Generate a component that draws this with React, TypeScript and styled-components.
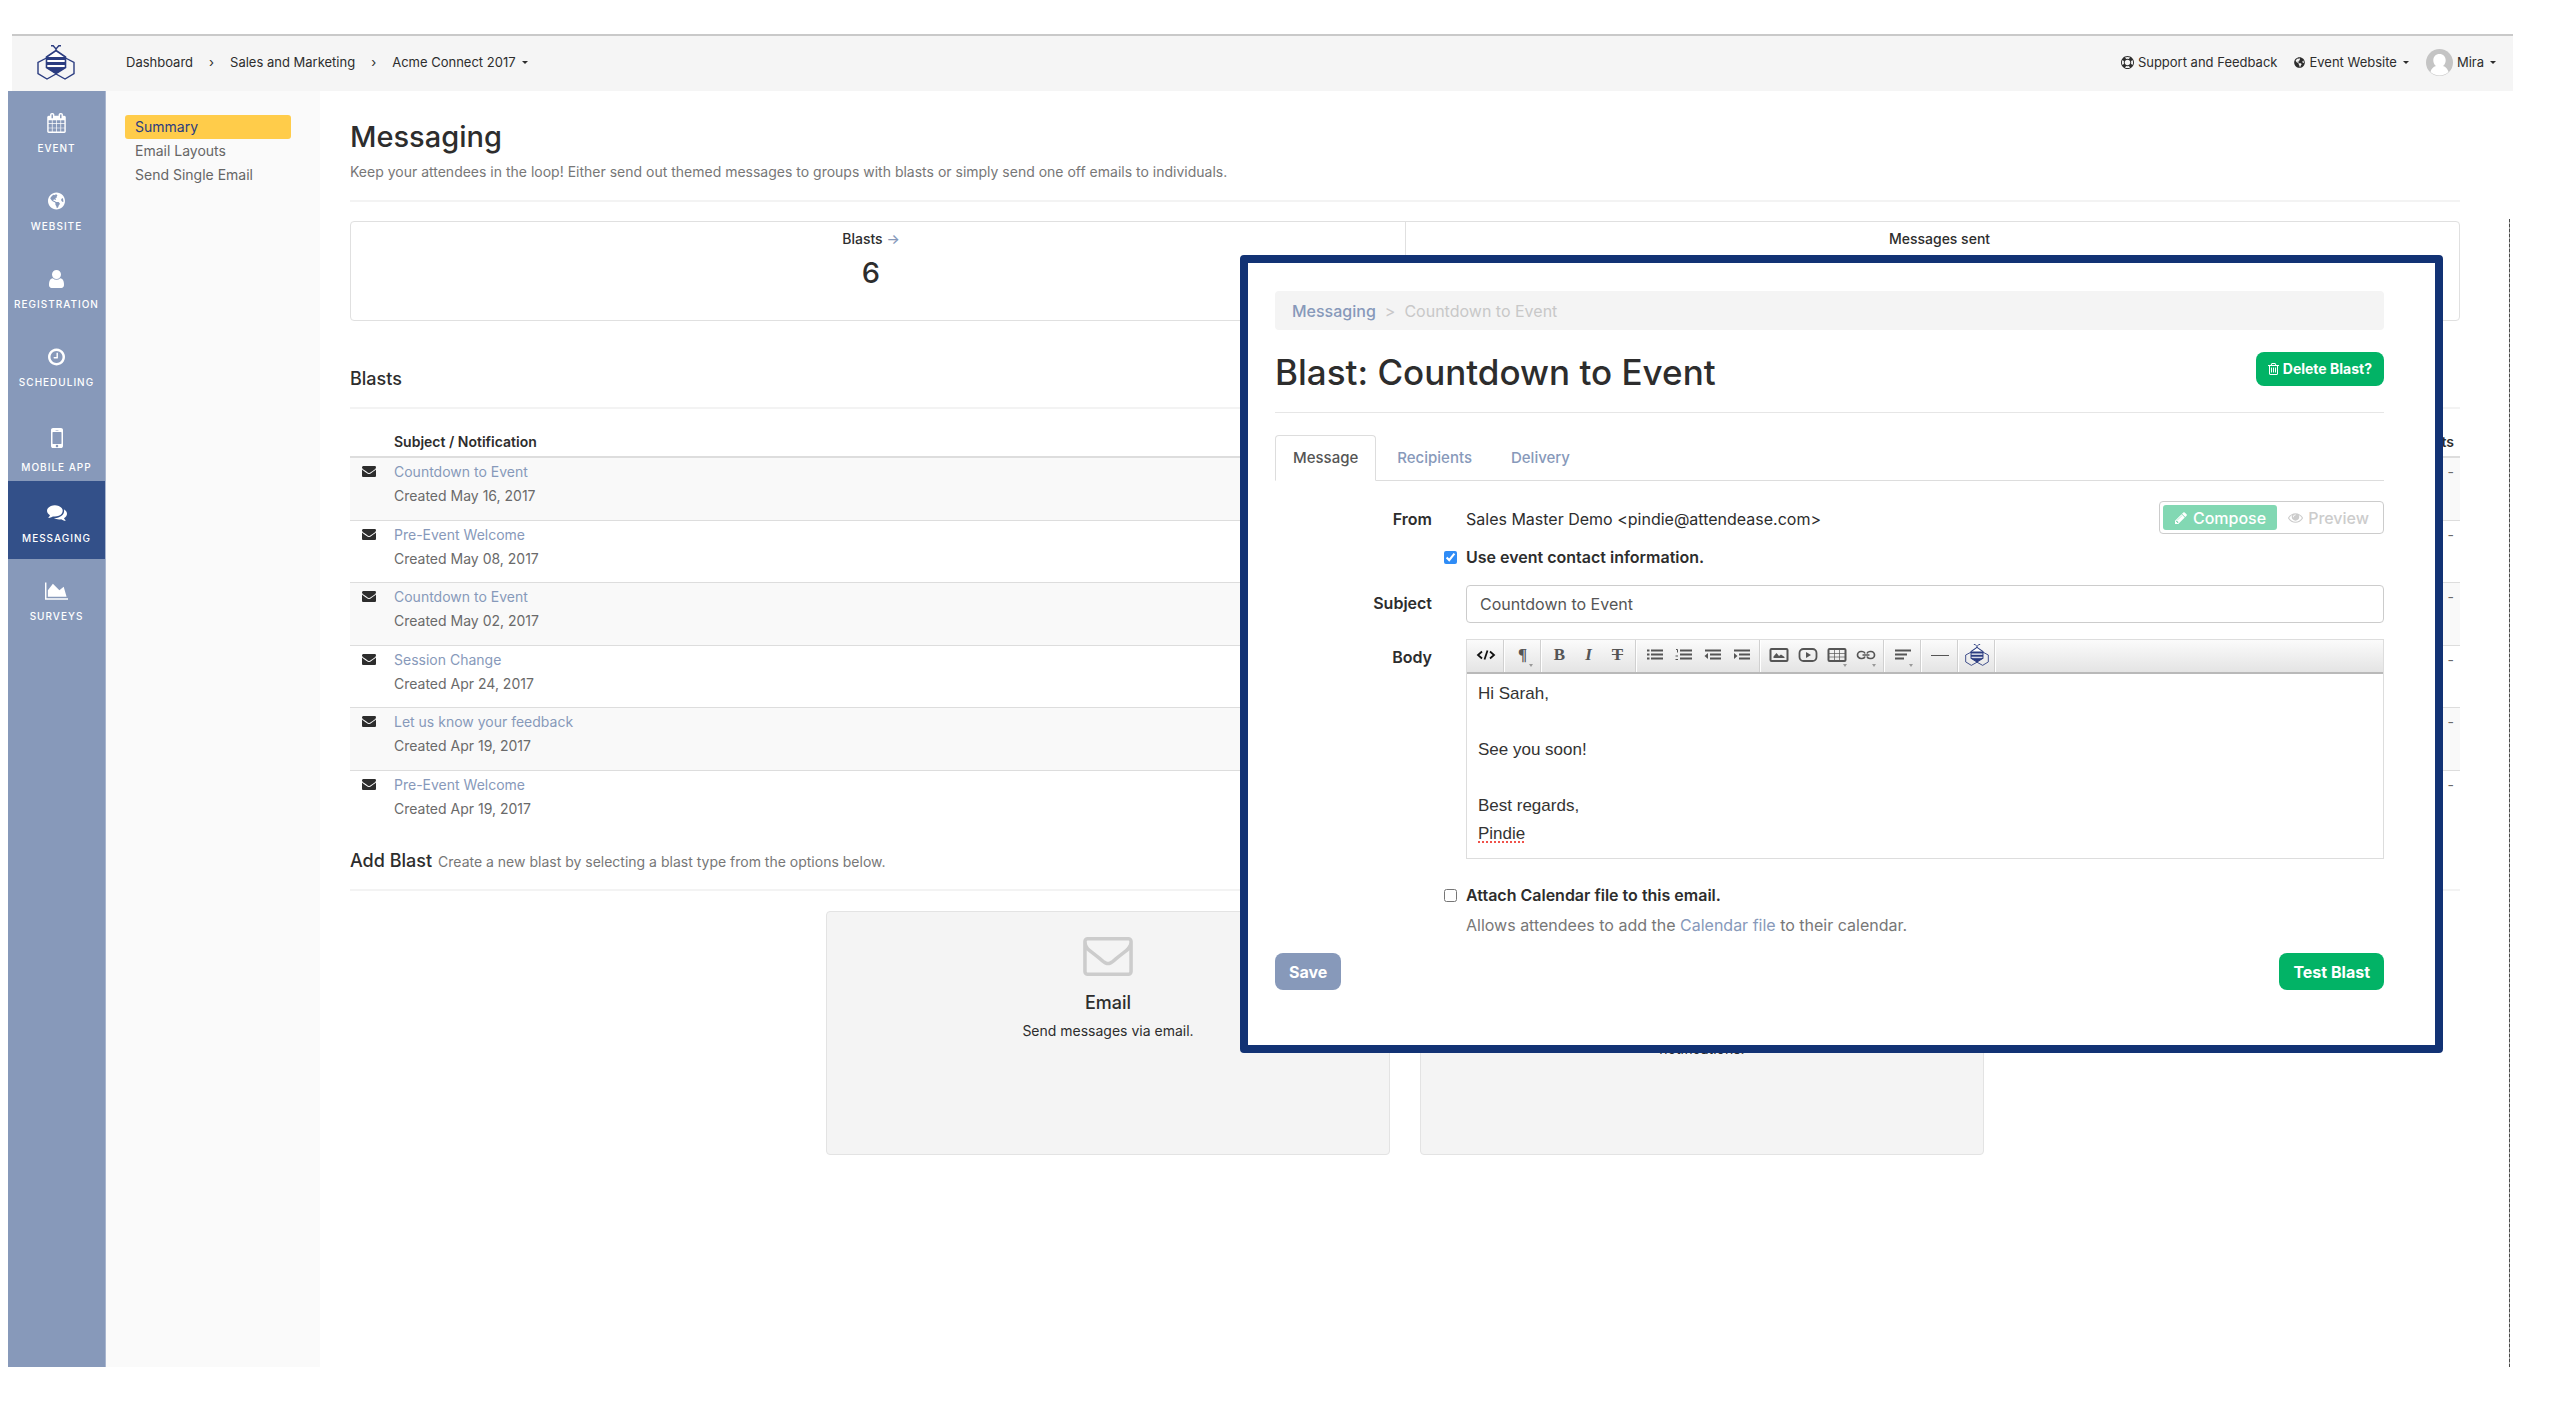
import React from "react";
import styled, { createGlobalStyle, css } from "styled-components";
import { FaGlobeAmericas } from "react-icons/fa";

const navy = "#123274";
const link = "#8799ba";
const green = "#02b366";
const ink = "#2d2d2d";

const GlobalStyle = createGlobalStyle`
  *, *::before, *::after { box-sizing: border-box; }
  body { margin: 0; background: #fff; color: ${ink}; font: 14px/20px Inter, "Open Sans", sans-serif; }
  h1, h2, h3, p, ul { margin: 0; padding: 0; }
  ul { list-style: none; }
  a { color: inherit; text-decoration: none; }
  button, input { font: inherit; }
`;

/* ---------- icons ---------- */

const paths = {
  calendar:
    "M192 1664h288v-288h-288v288zm352 0h320v-288h-320v288zm-352-352h288v-320h-288v320zm352 0h320v-320h-320v320zm-352-384h288v-288h-288v288zm736 736h320v-288h-320v288zm-384-736h320v-288h-320v288zm768 736h288v-288h-288v288zm-384-352h320v-320h-320v320zm-352-864v-288q0-13-9.5-22.5t-22.5-9.5h-64q-13 0-22.5 9.5t-9.5 22.5v288q0 13 9.5 22.5t22.5 9.5h64q13 0 22.5-9.5t9.5-22.5zm736 864h288v-320h-288v320zm-384-384h320v-288h-320v288zm384 0h288v-288h-288v288zm32-480v-288q0-13-9.5-22.5t-22.5-9.5h-64q-13 0-22.5 9.5t-9.5 22.5v288q0 13 9.5 22.5t22.5 9.5h64q13 0 22.5-9.5t9.5-22.5zm384-64v1280q0 52-38 90t-90 38h-1408q-52 0-90-38t-38-90v-1280q0-52 38-90t90-38h128v-96q0-66 47-113t113-47h64q66 0 113 47t47 113v96h384v-96q0-66 47-113t113-47h64q66 0 113 47t47 113v96h128q52 0 90 38t38 90z",
  user: "M1536 1399q0 109-62.5 187t-150.5 78h-854q-88 0-150.5-78t-62.5-187q0-85 8.5-160.5t31.5-152 58.5-131 94-89 134.5-34.5q131 128 313 128t313-128q76 0 134.5 34.5t94 89 58.5 131 31.5 152 8.5 160.5zm-256-887q0 159-112.5 271.5t-271.5 112.5-271.5-112.5-112.5-271.5 112.5-271.5 271.5-112.5 271.5 112.5 112.5 271.5z",
  clock:
    "M1024 544v448q0 14-9 23t-23 9h-320q-14 0-23-9t-9-23v-64q0-14 9-23t23-9h224v-352q0-14 9-23t23-9h64q14 0 23 9t9 23zm416 352q0-148-73-273t-198-198-273-73-273 73-198 198-73 273 73 273 198 198 273 73 273-73 198-198 73-273zm224 0q0 209-103 385.5t-279.5 279.5-385.5 103-385.5-103-279.5-279.5-103-385.5 103-385.5 279.5-279.5 385.5-103 385.5 103 279.5 279.5 103 385.5z",
  mobile:
    "M976 1408q0-33-23.5-56.5t-56.5-23.5-56.5 23.5-23.5 56.5 23.5 56.5 56.5 23.5 56.5-23.5 23.5-56.5zm208-160v-704q0-13-9.5-22.5t-22.5-9.5h-512q-13 0-22.5 9.5t-9.5 22.5v704q0 13 9.5 22.5t22.5 9.5h512q13 0 22.5-9.5t9.5-22.5zm-192-848q0-16-16-16h-160q-16 0-16 16t16 16h160q16 0 16-16zm288-16v1024q0 52-38 90t-90 38h-512q-52 0-90-38t-38-90v-1024q0-52 38-90t90-38h512q52 0 90 38t38 90z",
  comments:
    "M1408 768q0 139-94 257t-256.5 186.5-353.5 68.5q-86 0-176-16-124 88-278 128-36 9-86 16h-3q-11 0-20.5-8t-11.5-21q-1-3-1-6.5t.5-6.5 2-6l2.5-5 3.5-5.5 4-5 4.5-5 4-4.5q5-6 23-25t26-29.5 22.5-29 25-38.5 20.5-44q-124-72-195-177t-71-224q0-139 94-257t256.5-186.5 353.5-68.5 353.5 68.5 256.5 186.5 94 257zm384 256q0 120-71 224.5t-195 176.5q10 24 20.5 44t25 38.5 22.5 29 26 29.5 23 25q1 1 4 4.5t4.5 5 4 5 3.5 5.5l2.5 5 2 6 .5 6.5-1 6.5q-3 14-13 22t-22 7q-50-7-86-16-154-40-278-128-90 16-176 16-271 0-472-132 58 4 88 4 161 0 309-45t264-129q125-92 192-212t67-254q0-77-23-152 129 71 204 178t75 230z",
  chart: "M2048 1536v128h-2048v-1536h128v1408h1920zm-384-1024l256 896h-1664v-576l448-576 576 576z",
  envelope:
    "M1792 710v794q0 66-47 113t-113 47h-1472q-66 0-113-47t-47-113v-794q44 49 101 87 362 246 497 345 57 42 92.5 65.5t94.5 48 110 24.5h2q51 0 110-24.5t94.5-48 92.5-65.5q170-123 498-345 57-39 100-87zm0-294q0 79-49 151t-122 123q-376 261-468 325-10 7-42.5 31t-54 38.5-52 32.5-57.5 27-50 9h-2q-23 0-50-9t-57.5-27-52-32.5-54-38.5-42.5-31q-91-64-262-182.5t-205-142.5q-62-42-117-115.5t-55-136.5q0-78 41.5-130t118.5-52h1472q65 0 112.5 47t47.5 113z",
  envelopeOutline:
    "M1664 1504v-768q-32 36-69 66-268 206-426 338-51 43-83 67t-86.5 48.5-102.5 24.5h-2q-48 0-102.5-24.5t-86.5-48.5-83-67q-158-132-426-338-37-30-69-66v768q0 13 9.5 22.5t22.5 9.5h1472q13 0 22.5-9.5t9.5-22.5zm0-1051v-24.5l-.5-13-3-12.5-5.5-9-9-7.5-14-2.5h-1472q-13 0-22.5 9.5t-9.5 22.5q0 168 147 284 193 152 401 317 6 5 35 29.5t46 37.5 44.5 31.5 50.5 27.5 43 9h2q20 0 43-9t50.5-27.5 44.5-31.5 46-37.5 35-29.5q208-165 401-317 54-43 100.5-115.5t46.5-131.5zm128-37v1088q0 66-47 113t-113 47h-1472q-66 0-113-47t-47-113v-1088q0-66 47-113t113-47h1472q66 0 113 47t47 113z",
  lifeRing:
    "M896 0q182 0 348 71t286 191 191 286 71 348-71 348-191 286-286 191-348 71-348-71-286-191-191-286-71-348 71-348 191-286 286-191 348-71zm0 128q-190 0-361 90l194 194q82-28 167-28t167 28l194-194q-171-90-361-90zm-678 1129l194-194q-28-82-28-167t28-167l-194-194q-90 171-90 361t90 361zm678 407q190 0 361-90l-194-194q-82 28-167 28t-167-28l-194 194q171 90 361 90zm0-384q159 0 271.5-112.5t112.5-271.5-112.5-271.5-271.5-112.5-271.5 112.5-112.5 271.5 112.5 271.5 271.5 112.5zm484-217l194 194q90-171 90-361t-90-361l-194 194q28 82 28 167t-28 167z",
  trash:
    "M704 736v576q0 14-9 23t-23 9h-64q-14 0-23-9t-9-23v-576q0-14 9-23t23-9h64q14 0 23 9t9 23zm256 0v576q0 14-9 23t-23 9h-64q-14 0-23-9t-9-23v-576q0-14 9-23t23-9h64q14 0 23 9t9 23zm256 0v576q0 14-9 23t-23 9h-64q-14 0-23-9t-9-23v-576q0-14 9-23t23-9h64q14 0 23 9t9 23zm128 724v-948h-896v948q0 22 7 40.5t14.5 27 10.5 8.5h832q3 0 10.5-8.5t14.5-27 7-40.5zm-672-1076h448l-48-117q-7-9-17-11h-317q-10 2-17 11zm928 32v64q0 14-9 23t-23 9h-96v948q0 83-47 143.5t-113 60.5h-832q-66 0-113-58.5t-47-141.5v-952h-96q-14 0-23-9t-9-23v-64q0-14 9-23t23-9h309l70-167q15-37 54-63t79-26h320q40 0 79 26t54 63l70 167h309q14 0 23 9t9 23z",
  pencil:
    "M491 1536l91-91-235-235-91 91v107h128v128h107zm523-928q0-22-22-22-10 0-17 7l-542 542q-7 7-7 17 0 22 22 22 10 0 17-7l542-542q7-7 7-17zm-54-192l416 416-832 832h-416v-416zm683 96q0 53-37 90l-166 166-416-416 166-165q36-38 90-38 53 0 91 38l235 234q37 39 37 91z",
  eye: "M1664 960q-152-236-381-353 61 104 61 225 0 185-131.5 316.5t-316.5 131.5-316.5-131.5-131.5-316.5q0-121 61-225-229 117-381 353 133 205 333.5 326.5t434.5 121.5 434.5-121.5 333.5-326.5zm-720-384q0-20-14-34t-34-14q-125 0-214.5 89.5t-89.5 214.5q0 20 14 34t34 14 34-14 14-34q0-86 61-147t147-61q20 0 34-14t14-34zm848 384q0 34-20 69-140 230-376.5 368.5t-499.5 138.5-499.5-139-376.5-368q-20-35-20-69t20-69q140-229 376.5-368t499.5-139 499.5 139 376.5 368q20 35 20 69z",
};

type IconName = keyof typeof paths;

const viewBoxes: Partial<Record<IconName, string>> = {
  calendar: "64 0 1664 1792",
  user: "256 128 1280 1536",
  clock: "128 128 1536 1536",
  mobile: "512 256 768 1280",
  comments: "0 256 1792 1408",
  chart: "0 128 2048 1536",
  envelope: "0 256 1792 1408",
  envelopeOutline: "0 256 1792 1408",
  trash: "192 128 1408 1536",
};

function Icon({ name, width, height }: { name: IconName; width: number; height: number }) {
  return (
    <svg
      width={width}
      height={height}
      viewBox={viewBoxes[name] ?? "0 0 1792 1792"}
      fill="currentColor"
      aria-hidden="true"
    >
      <path d={paths[name]} />
    </svg>
  );
}

function BeeLogo({ width, height }: { width: number; height: number }) {
  return (
    <svg width={width} height={height} viewBox="0 0 38 35" fill="none" stroke="#2b3c80" aria-hidden="true">
      <path d="M9.500 13 1 17.500v11L10 34l9-5 9 5 9-5.500v-11L28.500 13" strokeWidth="1.400" />
      <path d="M14 .8h2.200L19 4l2.800-3.200H24M19 4v3" strokeWidth="1.400" />
      <path d="M19 5.500l9.500 6.500v10.500L19 28.500l-9.500-6V12z" fill="#fff" strokeWidth="1.600" />
      <path d="M9.500 13.500h19M9.500 18.600h19" strokeWidth="3" />
      <path d="M10 22.600h18l-9 5.800z" fill="#2b3c80" strokeWidth="1" />
    </svg>
  );
}

/* ---------- page frame ---------- */

const Page = styled.div`
  position: relative;
  padding: 34px 37px 53px 8px;
`;

const TopBar = styled.header`
  display: flex;
  align-items: center;
  height: 57px;
  margin-left: 4px;
  padding: 0 17px 3px 25px;
  border-top: 2px solid #c9c9c9;
  background: #f5f5f5;
  font-size: 13px;
`;

const Home = styled.a`
  display: flex;
`;

const Crumbs = styled.nav`
  display: flex;
  flex: 1;
  align-items: center;
  gap: 16px;
  margin-left: 51px;
`;

const TopLinks = styled.div`
  display: flex;
  align-items: center;
  gap: 17px;
`;

const TopLink = styled.a`
  display: flex;
  align-items: center;
  gap: 4px;
`;

const Caret = styled.span`
  border: 3px solid transparent;
  border-top-color: currentColor;
  border-bottom: 0;
  margin-left: 2px;
`;

const Columns = styled.div`
  display: grid;
  grid-template-columns: 98px 214px minmax(0, 1fr) 1px;
  min-height: calc(100vh - 144px);
  margin-right: 3px;
`;

const SideNav = styled.nav`
  background: ${link};
  border-right: 1px solid #a9b6cf;
`;

const SideLink = styled.a<{ $active?: boolean; $tall?: boolean }>`
  display: flex;
  flex-direction: column;
  align-items: center;
  height: 78px;
  padding-top: ${(p) => (p.$tall ? 25 : 22)}px;
  gap: ${(p) => (p.$tall ? 9 : 5)}px;
  color: #fff;
  font-size: 10px;
  line-height: 20px;
  font-weight: 500;
  letter-spacing: 1px;
  text-transform: uppercase;
  background: ${(p) => (p.$active ? "#335089" : "transparent")};

  svg {
    height: 20px;
  }
`;

const SubNav = styled.nav`
  padding: 24px 29px 0 19px;
  background: #fafafa;
`;

const SubLink = styled.a<{ $active?: boolean }>`
  display: block;
  padding: 0 10px;
  border-radius: 3px;
  color: #666;
  line-height: 24px;
  ${(p) =>
    p.$active &&
    css`
      color: #2b3c80;
      background: #ffcc4a;
    `}
`;

const Main = styled.main`
  padding: 29px 49px 0 30px;
`;

const PageEdge = styled.div`
  margin-top: 128px;
  background: repeating-linear-gradient(#4a4a4a 0 3px, #a8a8a8 3px 5px);
`;

/* ---------- summary page ---------- */

const PageTitle = styled.h1`
  font-size: 29px;
  line-height: 34px;
  font-weight: 500;
`;

const Lead = styled.p`
  margin-top: 8px;
  padding-bottom: 18px;
  border-bottom: 2px solid #f3f3f3;
  color: #777;
`;

const Stats = styled.section`
  display: grid;
  grid-template-columns: 1fr 1fr;
  height: 100px;
  margin-top: 19px;
  border: 1px solid #e0e0e0;
  border-radius: 4px;
`;

const Stat = styled.div`
  padding: 7px 14px 0 0;
  text-align: center;
  font-weight: 500;

  & + & {
    padding: 7px 0 0 14px;
    border-left: 1px solid #e0e0e0;
  }
`;

const StatLink = styled.a`
  color: ${link};
`;

const StatValue = styled.div`
  margin-top: 7px;
  font-size: 29px;
  line-height: 34px;
`;

const SectionHead = styled.header<{ $gap: number }>`
  display: flex;
  align-items: baseline;
  gap: 6px;
  margin-top: ${(p) => p.$gap}px;
  padding-bottom: 16px;
  border-bottom: 2px solid #f3f3f3;
  color: #777;
`;

const SectionTitle = styled.h2`
  color: ${ink};
  font-size: 18px;
  line-height: 24px;
  font-weight: 500;
`;

const BlastTable = styled.table`
  width: 100%;
  margin-top: 18px;
  border-collapse: collapse;
  table-layout: fixed;
  line-height: 24px;

  th {
    height: 30px;
    padding: 0 5px;
    border-bottom: 2px solid #ddd;
    font-weight: 600;
    text-align: left;
  }
  td {
    height: 62px;
    padding: 2px 10px 0 5px;
    border-bottom: 1px solid #ddd;
    vertical-align: top;
    color: #6a6a6a;
  }
  th:first-child,
  td:first-child {
    width: 39px;
    padding-left: 12px;
    color: ${ink};
  }
  th:last-child,
  td:last-child {
    padding-right: 6px;
    text-align: right;
  }
  tbody tr:nth-child(odd) td {
    height: 63px;
    background: #f9f9f9;
  }
  tbody tr:last-child td {
    border-bottom: 0;
  }
`;

const BlastLink = styled.a`
  display: block;
  color: ${link};
`;

const Cards = styled.div`
  display: flex;
  justify-content: center;
  gap: 30px;
  margin-top: 20px;
`;

const Card = styled.a`
  flex: 0 1 564px;
  height: 244px;
  padding-top: 25px;
  border: 1px solid #e3e3e3;
  border-radius: 4px;
  background: #f4f4f4;
  text-align: center;

  svg {
    display: block;
    margin: 0 auto 15px;
    color: #ccc;
  }
`;

const CardTitle = styled.h3`
  font-size: 18px;
  line-height: 24px;
  font-weight: 500;
`;

const CardText = styled.p`
  max-width: 220px;
  margin: 7px auto 0;
  line-height: 18px;
`;

/* ---------- blast dialog ---------- */

const Dialog = styled.section`
  position: absolute;
  top: 255px;
  right: 107px;
  width: 1203px;
  padding: 28px 51px 55px 27px;
  border: 8px solid ${navy};
  border-radius: 4px;
  background: #fff;
  font-size: 16px;
`;

const DialogCrumbs = styled.nav`
  display: flex;
  align-items: center;
  gap: 9px;
  height: 39px;
  padding: 0 17px;
  border-radius: 4px;
  background: #f4f4f4;
  color: #c8c8c8;

  a {
    color: ${link};
    font-weight: 500;
  }
`;

const DialogHead = styled.header`
  display: flex;
  align-items: flex-start;
  justify-content: space-between;
  margin-top: 22px;
  padding-bottom: 20px;
  border-bottom: 1px solid #e6e6e6;

  h2 {
    font-size: 35px;
    line-height: 40px;
    font-weight: 500;
  }
`;

const Button = styled.button<{ $tone: string; $small?: boolean }>`
  display: flex;
  align-items: center;
  gap: 4px;
  height: ${(p) => (p.$small ? 34 : 37)}px;
  padding: 0 ${(p) => (p.$small ? 12 : 14)}px;
  border: 0;
  border-radius: 8px;
  background: ${(p) => p.$tone};
  color: #fff;
  font-size: ${(p) => (p.$small ? 14 : 16)}px;
  font-weight: 700;
`;

const Tabs = styled.div`
  display: flex;
  gap: 3px;
  height: 46px;
  margin-top: 22px;
  border-bottom: 1px solid #ddd;
  font-size: 15px;
`;

const Tab = styled.button<{ $active?: boolean }>`
  height: 46px;
  padding: 0 17px;
  border: 1px solid transparent;
  border-radius: 4px 4px 0 0;
  background: none;
  color: ${link};
  font-weight: 500;
  ${(p) =>
    p.$active &&
    css`
      border-color: #ddd #ddd #fff;
      background: #fff;
      color: #555;
    `}
`;

const FormRow = styled.div<{ $gap: number }>`
  display: grid;
  grid-template-columns: 157px minmax(0, 1fr);
  column-gap: 34px;
  margin-top: ${(p) => p.$gap}px;
`;

const FieldLabel = styled.label`
  font-weight: 600;
  line-height: 36px;
  text-align: right;
`;

const Sender = styled.div`
  display: flex;
  justify-content: space-between;
  line-height: 36px;
`;

const Toggle = styled.div`
  display: flex;
  height: 33px;
  padding: 3px;
  border: 1px solid #ccc;
  border-radius: 4px;
`;

const ToggleButton = styled.button<{ $active?: boolean }>`
  display: flex;
  align-items: center;
  gap: 5px;
  padding: 0 11px;
  border: 0;
  border-radius: 3px;
  background: ${(p) => (p.$active ? "#82d8b3" : "none")};
  color: ${(p) => (p.$active ? "#fff" : "#ccc")};
  font-weight: 500;
`;

const CheckRow = styled.div<{ $gap: number }>`
  display: flex;
  align-items: center;
  gap: 9px;
  height: 20px;
  margin-top: ${(p) => p.$gap}px;
  padding-left: 169px;
  font-weight: 600;

  input {
    width: 13px;
    height: 13px;
    margin: 0;
    accent-color: #2f8cf6;
  }
`;

const TextInput = styled.input`
  width: 100%;
  height: 38px;
  padding: 0 13px;
  border: 1px solid #ccc;
  border-radius: 4px;
  color: #555;
`;

const Editor = styled.div`
  border: 1px solid #ddd;
`;

const Toolbar = styled.div`
  display: flex;
  height: 34px;
  border-bottom: 2px solid #b9b9b9;
  background: linear-gradient(#fbfbfb, #e4e4e4);
`;

const ToolGroup = styled.div`
  display: flex;
  padding: 0 3px 0 4px;
  border-right: 1px solid #d0d0d0;
  box-shadow: 1px 0 0 #fff;
`;

const Tool = styled.button`
  position: relative;
  display: grid;
  place-items: center;
  width: 29px;
  padding: 0 0 2px;
  border: 0;
  background: none;
  color: #555;
`;

const ToolGlyph = styled.span<{ $italic?: boolean; $strike?: boolean }>`
  font: ${(p) => (p.$italic ? "italic" : "normal")} 700 17px/20px "Liberation Serif", serif;
  text-decoration: ${(p) => (p.$strike ? "line-through" : "none")};
`;

const MenuMark = styled.span`
  position: absolute;
  right: 4px;
  bottom: 5px;
  border: 2px solid transparent;
  border-top: 3px solid #999;
  border-bottom: 0;
`;

const EditorBody = styled.div`
  padding: 6px 11px 10px;
  color: #333;
  font: 17px/28px "Liberation Sans", Arial, sans-serif;
  outline: 0;

  p {
    min-height: 28px;
  }
`;

const Misspelled = styled.span`
  text-decoration: underline dotted #f0524a 2px;
  text-underline-offset: 2px;
`;

const Help = styled.p`
  margin-top: 10px;
  padding-left: 191px;
  color: #777;

  a {
    color: ${link};
  }
`;

const DialogFoot = styled.footer`
  display: flex;
  justify-content: space-between;
  margin-top: 18px;
`;

/* ---------- toolbar drawings ---------- */

function Drawing({ children }: { children: React.ReactNode }) {
  return (
    <svg width="20" height="16" viewBox="0 0 20 16" fill="none" stroke="currentColor" aria-hidden="true">
      {children}
    </svg>
  );
}

const listLines = "M6 3.500h12M6 7.500h12M6 11.500h12";

const toolGroups: { label: string; menu?: boolean; art: React.ReactNode }[][] = [
  [
    {
      label: "HTML",
      art: (
        <Drawing>
          <path d="M6 4.500 2 8l4 3.500M14 4.500 18 8l-4 3.500M11.500 3.500l-3 9" stroke="#111" strokeWidth="1.800" />
        </Drawing>
      ),
    },
  ],
  [{ label: "Formatting", menu: true, art: <ToolGlyph>¶</ToolGlyph> }],
  [
    { label: "Bold", art: <ToolGlyph>B</ToolGlyph> },
    { label: "Italic", art: <ToolGlyph $italic>I</ToolGlyph> },
    { label: "Strikethrough", art: <ToolGlyph $strike>T</ToolGlyph> },
  ],
  [
    {
      label: "Unordered list",
      art: (
        <Drawing>
          <path d={listLines} strokeWidth="2" />
          <path d="M2 3.500h2.500M2 7.500h2.500M2 11.500h2.500" strokeWidth="2" />
        </Drawing>
      ),
    },
    {
      label: "Ordered list",
      art: (
        <Drawing>
          <path d={listLines} strokeWidth="2" />
          <path d="M2 2.500h1.500v3M1.500 9h2.500M1.500 12.500h2.500" strokeWidth="1" />
        </Drawing>
      ),
    },
    {
      label: "Outdent",
      art: (
        <Drawing>
          <path d="M2 3.500h16M7 7.500h11M7 11.500h11" strokeWidth="2" />
          <path d="M5 6v6L1.500 9z" fill="currentColor" stroke="none" />
        </Drawing>
      ),
    },
    {
      label: "Indent",
      art: (
        <Drawing>
          <path d="M2 3.500h16M7 7.500h11M7 11.500h11" strokeWidth="2" />
          <path d="M2 6v6l3.500-3z" fill="currentColor" stroke="none" />
        </Drawing>
      ),
    },
  ],
  [
    {
      label: "Image",
      art: (
        <Drawing>
          <rect x="1.500" y="2" width="17" height="12" rx="1" strokeWidth="2" />
          <path d="M4.500 11V9.500L7.500 6l2.500 3 2-1.500 3.500 2.500v1z" fill="currentColor" stroke="none" />
        </Drawing>
      ),
    },
    {
      label: "Video",
      art: (
        <Drawing>
          <rect x="1.500" y="2" width="17" height="12" rx="4" strokeWidth="1.800" />
          <path d="M8 5v6l5-3z" fill="currentColor" stroke="none" />
        </Drawing>
      ),
    },
    {
      label: "Table",
      menu: true,
      art: (
        <Drawing>
          <rect x="1.500" y="2" width="17" height="12" rx="1" strokeWidth="2" />
          <path d="M7.500 3v10M12.500 3v10M2 6.500h16M2 10h16" strokeWidth="1" opacity="0.7" />
        </Drawing>
      ),
    },
    {
      label: "Link",
      menu: true,
      art: (
        <Drawing>
          <path
            d="M9 9.500C8.500 11 7.500 11.500 6 11.500H5a3.500 3.500 0 0 1 0-7h1C7.500 4.500 8.500 5 9 6.500M11 6.500c.5-1.500 1.500-2 3-2h1a3.500 3.500 0 0 1 0 7h-1c-1.500 0-2.500-.5-3-2M6.500 8h7"
            strokeWidth="1.700"
          />
        </Drawing>
      ),
    },
  ],
  [
    {
      label: "Align",
      menu: true,
      art: (
        <Drawing>
          <path d="M2 3.500h16M2 7.500h12M2 11.500h9" strokeWidth="2" />
        </Drawing>
      ),
    },
  ],
  [
    {
      label: "Horizontal rule",
      art: (
        <Drawing>
          <path d="M1 8.500h18" strokeWidth="1" />
        </Drawing>
      ),
    },
  ],
  [{ label: "Merge tags", art: <BeeLogo width={24} height={22} /> }],
];

/* ---------- data ---------- */

const sections: { label: string; icon: React.ReactNode; active?: boolean; tall?: boolean }[] = [
  { label: "Event", icon: <Icon name="calendar" width={19} height={20} /> },
  { label: "Website", icon: <FaGlobeAmericas size={17} /> },
  { label: "Registration", icon: <Icon name="user" width={15} height={17} /> },
  { label: "Scheduling", icon: <Icon name="clock" width={17} height={17} /> },
  { label: "Mobile App", icon: <Icon name="mobile" width={12} height={20} />, tall: true },
  { label: "Messaging", icon: <Icon name="comments" width={20} height={16} />, active: true },
  { label: "Surveys", icon: <Icon name="chart" width={23} height={17} /> },
];

const blasts = [
  ["Countdown to Event", "May 16, 2017"],
  ["Pre-Event Welcome", "May 08, 2017"],
  ["Countdown to Event", "May 02, 2017"],
  ["Session Change", "Apr 24, 2017"],
  ["Let us know your feedback", "Apr 19, 2017"],
  ["Pre-Event Welcome", "Apr 19, 2017"],
];

function Avatar() {
  return (
    <svg width="27" height="27" viewBox="0 0 27 27" aria-hidden="true">
      <circle cx="13.500" cy="13.500" r="13.500" fill="#c4c4c4" />
      <path
        d="M13.500 5c3.700 0 6.200 2.700 6.200 6.300 0 2.400-1 4.500-2.700 5.800 2.800.8 4.800 3 5.500 6A13.500 13.500 0 0 1 4.500 23c.7-2.900 2.700-5.100 5.500-5.900-1.700-1.300-2.700-3.400-2.700-5.800C7.300 7.700 9.800 5 13.500 5z"
        fill="#fff"
      />
    </svg>
  );
}

function BlastDialog() {
  return (
    <Dialog role="dialog" aria-labelledby="blast-title">
      <DialogCrumbs>
        <a href="#messaging">Messaging</a>
        <span>&gt;</span>
        <span>Countdown to Event</span>
      </DialogCrumbs>
      <DialogHead>
        <h2 id="blast-title">Blast: Countdown to Event</h2>
        <Button type="button" $tone={green} $small>
          <Icon name="trash" width={11} height={12} />
          Delete Blast?
        </Button>
      </DialogHead>
      <Tabs role="tablist">
        <Tab type="button" role="tab" aria-selected="true" $active>
          Message
        </Tab>
        <Tab type="button" role="tab" aria-selected="false">
          Recipients
        </Tab>
        <Tab type="button" role="tab" aria-selected="false">
          Delivery
        </Tab>
      </Tabs>
      <FormRow $gap={20}>
        <FieldLabel as="span">From</FieldLabel>
        <Sender>
          <span>Sales Master Demo &lt;pindie@attendease.com&gt;</span>
          <Toggle>
            <ToggleButton type="button" $active>
              <Icon name="pencil" width={14} height={14} />
              Compose
            </ToggleButton>
            <ToggleButton type="button">
              <Icon name="eye" width={15} height={15} />
              Preview
            </ToggleButton>
          </Toggle>
        </Sender>
      </FormRow>
      <CheckRow $gap={10}>
        <input id="event-contact" type="checkbox" defaultChecked />
        <label htmlFor="event-contact">Use event contact information.</label>
      </CheckRow>
      <FormRow $gap={18}>
        <FieldLabel htmlFor="subject">Subject</FieldLabel>
        <TextInput id="subject" type="text" defaultValue="Countdown to Event" />
      </FormRow>
      <FormRow $gap={16}>
        <FieldLabel as="span" id="body-label">
          Body
        </FieldLabel>
        <Editor>
          <Toolbar role="toolbar">
            {toolGroups.map((group, i) => (
              <ToolGroup key={i}>
                {group.map((tool) => (
                  <Tool key={tool.label} type="button" aria-label={tool.label}>
                    {tool.art}
                    {tool.menu && <MenuMark />}
                  </Tool>
                ))}
              </ToolGroup>
            ))}
          </Toolbar>
          <EditorBody
            role="textbox"
            aria-multiline="true"
            aria-labelledby="body-label"
            contentEditable
            suppressContentEditableWarning
            spellCheck={false}
          >
            <p>Hi Sarah,</p>
            <p />
            <p>See you soon!</p>
            <p />
            <p>Best regards,</p>
            <p>
              <Misspelled>Pindie</Misspelled>
            </p>
          </EditorBody>
        </Editor>
      </FormRow>
      <CheckRow $gap={26}>
        <input id="attach-calendar" type="checkbox" />
        <label htmlFor="attach-calendar">Attach Calendar file to this email.</label>
      </CheckRow>
      <Help>
        Allows attendees to add the <a href="#calendar-file">Calendar file</a> to their calendar.
      </Help>
      <DialogFoot>
        <Button type="button" $tone={link}>
          Save
        </Button>
        <Button type="button" $tone={green}>
          Test Blast
        </Button>
      </DialogFoot>
    </Dialog>
  );
}

export default function App() {
  return (
    <Page>
      <GlobalStyle />
      <TopBar>
        <Home href="#home" aria-label="Home">
          <BeeLogo width={38} height={35} />
        </Home>
        <Crumbs>
          <a href="#dashboard">Dashboard</a>
          <span>›</span>
          <a href="#sales">Sales and Marketing</a>
          <span>›</span>
          <TopLink href="#event">
            Acme Connect 2017
            <Caret />
          </TopLink>
        </Crumbs>
        <TopLinks>
          <TopLink href="#support">
            <Icon name="lifeRing" width={13} height={13} />
            Support and Feedback
          </TopLink>
          <TopLink href="#website">
            <FaGlobeAmericas size={11} />
            Event Website
            <Caret />
          </TopLink>
          <TopLink href="#account">
            <Avatar />
            Mira
            <Caret />
          </TopLink>
        </TopLinks>
      </TopBar>
      <Columns>
        <SideNav>
          {sections.map((s) => (
            <SideLink key={s.label} href={"#" + s.label} $active={s.active} $tall={s.tall}>
              {s.icon}
              {s.label}
            </SideLink>
          ))}
        </SideNav>
        <SubNav>
          <SubLink href="#summary" $active>
            Summary
          </SubLink>
          <SubLink href="#layouts">Email Layouts</SubLink>
          <SubLink href="#single">Send Single Email</SubLink>
        </SubNav>
        <Main>
          <PageTitle>Messaging</PageTitle>
          <Lead>
            Keep your attendees in the loop! Either send out themed messages to groups with blasts or simply send one
            off emails to individuals.
          </Lead>
          <Stats>
            <Stat>
              Blasts <StatLink href="#blasts">→</StatLink>
              <StatValue>6</StatValue>
            </Stat>
            <Stat>Messages sent</Stat>
          </Stats>
          <SectionHead $gap={46}>
            <SectionTitle>Blasts</SectionTitle>
          </SectionHead>
          <BlastTable>
            <thead>
              <tr>
                <th aria-label="Type" />
                <th>Subject / Notification</th>
                <th>Recipients</th>
              </tr>
            </thead>
            <tbody>
              {blasts.map(([subject, created], i) => (
                <tr key={i}>
                  <td>
                    <Icon name="envelope" width={14} height={11} />
                  </td>
                  <td>
                    <BlastLink href="#blast">{subject}</BlastLink>
                    Created {created}
                  </td>
                  <td>-</td>
                </tr>
              ))}
            </tbody>
          </BlastTable>
          <SectionHead $gap={17}>
            <SectionTitle>Add Blast</SectionTitle>
            Create a new blast by selecting a blast type from the options below.
          </SectionHead>
          <Cards>
            <Card href="#email">
              <Icon name="envelopeOutline" width={50} height={39} />
              <CardTitle>Email</CardTitle>
              <CardText>Send messages via email.</CardText>
            </Card>
            <Card href="#push">
              <Icon name="mobile" width={50} height={39} />
              <CardTitle>Mobile</CardTitle>
              <CardText>Send messages via mobile notifications.</CardText>
            </Card>
          </Cards>
        </Main>
        <PageEdge />
      </Columns>
      <BlastDialog />
    </Page>
  );
}
